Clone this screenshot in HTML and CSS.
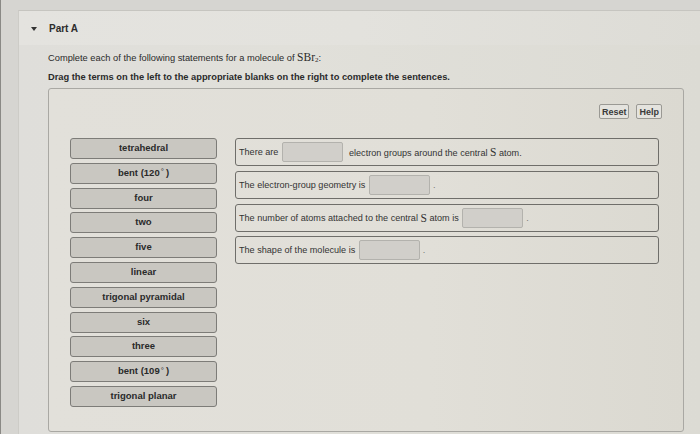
FILE: index.html
```html
<!DOCTYPE html>
<html>
<head>
<meta charset="utf-8">
<link rel="stylesheet" href="styles.css">
</head>
<body>
<div class="page">
  <div class="frame">
    <div class="header">
      <span class="caret"></span>
      <span class="part">Part A</span>
    </div>
    <div class="content">
      <p class="intro">Complete each of the following statements for a molecule of <span class="chem">SBr<sub>2</sub></span>:</p>
      <p class="instr">Drag the terms on the left to the appropriate blanks on the right to complete the sentences.</p>
      <div class="panel">
        <div class="toolbar">
          <button class="btn">Reset</button>
          <button class="btn">Help</button>
        </div>
        <div class="work">
          <div class="terms">
            <div class="term">tetrahedral</div>
            <div class="term">bent (120<sup>°</sup>)</div>
            <div class="term">four</div>
            <div class="term">two</div>
            <div class="term">five</div>
            <div class="term">linear</div>
            <div class="term">trigonal pyramidal</div>
            <div class="term">six</div>
            <div class="term">three</div>
            <div class="term">bent (109<sup>°</sup>)</div>
            <div class="term">trigonal planar</div>
          </div>
          <div class="sentences">
            <div class="sentence">There are <span class="blank"></span> <span class="after">electron groups around the central <span class="chem">S</span> atom.</span></div>
            <div class="sentence">The electron-group geometry is <span class="blank"></span><span class="dot">.</span></div>
            <div class="sentence">The number of atoms attached to the central <span class="chem">S</span> atom is <span class="blank"></span><span class="dot">.</span></div>
            <div class="sentence">The shape of the molecule is <span class="blank"></span><span class="dot">.</span></div>
          </div>
        </div>
      </div>
    </div>
  </div>
</div>
</body>
</html>
```

FILE: styles.css
```css
html, body {
  margin: 0;
  padding: 0;
}
body {
  width: 700px;
  height: 434px;
  overflow: hidden;
  background: #d6d5d1;
  font-family: "Liberation Sans", Arial, Helvetica, sans-serif;
  color: #2a2a2a;
  border-left: 1px solid #8a8985;
  box-sizing: border-box;
}
.page {
  padding-top: 10px;
}
.frame {
  margin-left: 17px;
  border-top: 1px solid #c6c5c0;
  border-left: 1px solid #cdccc7;
  background: linear-gradient(90deg, #dfdeda 0%, #e1e0da 40%, #dcdbd4 100%);
  height: 430px;
}
.header {
  height: 34px;
  display: flex;
  align-items: center;
  padding-left: 12px;
  background: linear-gradient(90deg, #e4e3df 0%, #e3e2dd 50%, #dddcd6 100%);
}
.caret {
  width: 0;
  height: 0;
  border-left: 3.5px solid transparent;
  border-right: 3.5px solid transparent;
  border-top: 4px solid #333;
  margin-right: 12px;
  margin-top: 1px;
}
.part {
  font-size: 10px;
  font-weight: bold;
  color: #2c2c2c;
}
.content {
  padding-left: 29px;
}
.intro {
  margin: 5px 0 0 0;
  font-size: 9.3px;
  line-height: 14px;
}
.chem {
  font-family: "Liberation Serif", "Times New Roman", serif;
  font-size: 11.5px;
}
.chem sub {
  font-size: 7px;
  vertical-align: -1px;
  line-height: 0;
}
.instr {
  margin: 5px 0 0 0;
  font-size: 9.3px;
  font-weight: bold;
  line-height: 14px;
  color: #2b2b2b;
}
.panel {
  margin-top: 4px;
  width: 636px;
  height: 344px;
  box-sizing: border-box;
  border: 1px solid #a9a8a3;
  border-radius: 3px;
  background: linear-gradient(90deg, #e2e0da 0%, #e1dfd8 60%, #dbd9d1 100%);
}
.toolbar {
  display: flex;
  justify-content: flex-end;
  gap: 7px;
  padding: 15px 21px 0 0;
}
.btn {
  font-family: "Liberation Sans", Arial, sans-serif;
  font-size: 9px;
  font-weight: bold;
  color: #3a3a3a;
  background: #e4e3de;
  border: 1px solid #9a9994;
  border-radius: 2px;
  height: 15px;
  padding: 0 2px;
  line-height: 12px;
}
.work {
  display: flex;
  gap: 18px;
  padding: 19px 0 0 21px;
}
.terms {
  display: flex;
  flex-direction: column;
  gap: 3.8px;
  width: 147px;
}
.term {
  height: 21px;
  box-sizing: border-box;
  border: 1px solid #7d7c78;
  border-radius: 3px;
  background: #c9c7c1;
  font-size: 9.5px;
  font-weight: bold;
  color: #2a2a2a;
  display: flex;
  align-items: center;
  justify-content: center;
  padding-bottom: 2px;
}
.term sup {
  font-size: 8px;
  font-weight: normal;
  vertical-align: 3px;
  line-height: 0;
  margin: 0 2px 0 1px;
}
.sentences {
  display: flex;
  flex-direction: column;
  gap: 4.8px;
  width: 424px;
}
.sentence {
  height: 28px;
  box-sizing: border-box;
  border: 1.5px solid #6f6e6a;
  border-radius: 3px;
  display: flex;
  align-items: center;
  padding-left: 3px;
  font-size: 9.1px;
  color: #333;
  white-space: pre;
}
.sentence .chem {
  font-size: 11.5px;
}
.blank {
  display: inline-block;
  width: 61px;
  height: 20px;
  box-sizing: border-box;
  border: 1px solid #b3b2ad;
  border-radius: 2px;
  background: #d1cfca;
  margin-left: 1px;
}
.after {
  margin-left: 6px;
}
.dot {
  margin-left: 3px;
  color: #777;
}
```
